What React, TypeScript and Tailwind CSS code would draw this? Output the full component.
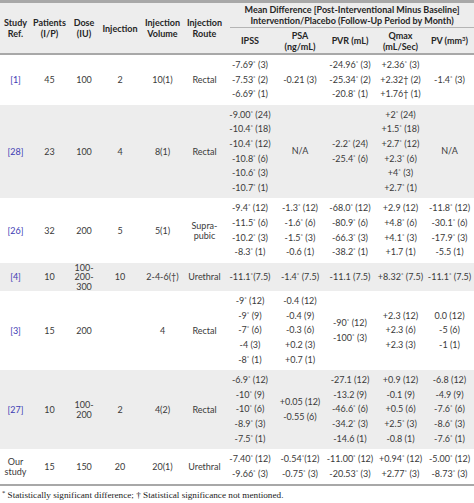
import React from "react";

type Cell = string[];

type Row = {
  ref: string;
  patients: string;
  dose: string[];
  injection: string;
  volume: string;
  route: string[];
  ipss: Cell;
  psa: Cell;
  pvr: Cell;
  qmax: Cell;
  pv: Cell;
  shaded?: boolean;
};

const rows: Row[] = [
  {
    ref: "[1]",
    patients: "45",
    dose: ["100"],
    injection: "2",
    volume: "10(1)",
    route: ["Rectal"],
    ipss: ["-7.69* (3)", "-7.53* (2)", "-6.69* (1)"],
    psa: ["-0.21 (3)"],
    pvr: ["-24.96* (3)", "-25.34* (2)", "-20.8* (1)"],
    qmax: ["+2.36* (3)", "+2.32† (2)", "+1.76† (1)"],
    pv: ["-1.4* (3)"],
  },
  {
    ref: "[28]",
    patients: "23",
    dose: ["100"],
    injection: "4",
    volume: "8(1)",
    route: ["Rectal"],
    ipss: ["-9.00* (24)", "-10.4* (18)", "-10.4* (12)", "-10.8* (6)", "-10.6* (3)", "-10.7* (1)"],
    psa: ["N/A"],
    pvr: ["-2.2* (24)", "-25.4* (6)"],
    qmax: ["+2* (24)", "+1.5* (18)", "+2.7* (12)", "+2.3* (6)", "+4* (3)", "+2.7* (1)"],
    pv: ["N/A"],
    shaded: true,
  },
  {
    ref: "[26]",
    patients: "32",
    dose: ["200"],
    injection: "5",
    volume: "5(1)",
    route: ["Supra-", "pubic"],
    ipss: ["-9.4* (12)", "-11.5* (6)", "-10.2* (3)", "-8.3* (1)"],
    psa: ["-1.3* (12)", "-1.6* (6)", "-1.5* (3)", "-0.6 (1)"],
    pvr: ["-68.0* (12)", "-80.9* (6)", "-66.3* (3)", "-38.2* (1)"],
    qmax: ["+2.9 (12)", "+4.8* (6)", "+4.1* (3)", "+1.7 (1)"],
    pv: ["-11.8* (12)", "-30.1* (6)", "-17.9* (3)", "-5.5 (1)"],
  },
  {
    ref: "[4]",
    patients: "10",
    dose: ["100-", "200-", "300"],
    injection: "10",
    volume: "2-4-6(†)",
    route: ["Urethral"],
    ipss: ["-11.1*(7.5)"],
    psa: ["-1.4* (7.5)"],
    pvr: ["-11.1 (7.5)"],
    qmax: ["+8.32* (7.5)"],
    pv: ["-11.1* (7.5)"],
    shaded: true,
  },
  {
    ref: "[3]",
    patients: "15",
    dose: ["200"],
    injection: "",
    volume: "4",
    route: ["Rectal"],
    ipss: ["-9* (12)", "-9* (9)", "-7* (6)", "-4 (3)", "-8* (1)"],
    psa: ["-0.4 (12)", "-0.4 (9)", "-0.3 (6)", "+0.2 (3)", "+0.7 (1)"],
    pvr: ["-90* (12)", "-100* (3)"],
    qmax: ["+2.3 (12)", "+2.3 (6)", "+2.3 (3)"],
    pv: ["0.0 (12)", "-5 (6)", "-1 (1)"],
  },
  {
    ref: "[27]",
    patients: "10",
    dose: ["100-", "200"],
    injection: "2",
    volume: "4(2)",
    route: ["Rectal"],
    ipss: ["-6.9* (12)", "-10* (9)", "-10* (6)", "-8.9* (3)", "-7.5* (1)"],
    psa: ["+0.05 (12)", "-0.55 (6)"],
    pvr: ["-27.1 (12)", "-13.2 (9)", "-46.6* (6)", "-34.2* (3)", "-14.6 (1)"],
    qmax: ["+0.9 (12)", "-0.1 (9)", "+0.5 (6)", "+2.5* (3)", "-0.8 (1)"],
    pv: ["-6.8 (12)", "-4.9 (9)", "-7.6* (6)", "-8.6* (3)", "-7.6* (1)"],
    shaded: true,
  },
  {
    ref: "Our study",
    patients: "15",
    dose: ["150"],
    injection: "20",
    volume: "20(1)",
    route: ["Urethral"],
    ipss: ["-7.40* (12)", "-9.66* (3)"],
    psa: ["-0.54*(12)", "-0.75* (3)"],
    pvr: ["-11.00* (12)", "-20.53* (3)"],
    qmax: ["+0.94* (12)", "+2.77* (3)"],
    pv: ["-5.00* (12)", "-8.73* (3)"],
  },
];

// "*" marks significance and sits raised and small after the number
function Value({ text }: { text: string }) {
  const parts = text.split("*");
  return (
    <>
      {parts.map((p, i) => (
        <React.Fragment key={i}>
          {i > 0 && <sup className="text-[6px] leading-[0]">*</sup>}
          {p}
        </React.Fragment>
      ))}
    </>
  );
}

function Lines({ values }: { values: string[] }) {
  return (
    <div className="flex flex-col items-center">
      {values.map((v, i) => (
        <div key={i} className="h-[14.6px] leading-[14.6px] whitespace-nowrap">
          <Value text={v} />
        </div>
      ))}
    </div>
  );
}

function Stack({ values, leading }: { values: string[]; leading: string }) {
  return (
    <div className={`flex flex-col items-center ${leading}`}>
      {values.map((v, i) => (
        <span key={i}>{v}</span>
      ))}
    </div>
  );
}

export default function App() {
  const th = "font-bold text-[#262626] text-center align-middle leading-[11px] px-0";
  const td = "text-center align-middle px-0 py-[3px]";

  return (
    <div className="w-[474px] bg-white font-['Lato','Liberation_Sans',sans-serif] text-[9px] text-[#3a3a3a]">
      <table className="w-[474px] table-fixed border-collapse">
        <colgroup>
          <col className="w-[31px]" />
          <col className="w-[37px]" />
          <col className="w-[32px]" />
          <col className="w-[40px]" />
          <col className="w-[45px]" />
          <col className="w-[39px]" />
          <col className="w-[52px]" />
          <col className="w-[48px]" />
          <col className="w-[52px]" />
          <col className="w-[49px]" />
          <col className="w-[49px]" />
        </colgroup>
        <thead className="bg-[#ededed] border-t-[3px] border-[#a8a8a8]">
          <tr className="h-[24px]">
            <th rowSpan={2} className={th}>
              Study
              <br />
              Ref.
            </th>
            <th rowSpan={2} className={th}>
              Patients
              <br />
              (I/P)
            </th>
            <th rowSpan={2} className={th}>
              Dose
              <br />
              (IU)
            </th>
            <th rowSpan={2} className={th}>
              Injection
            </th>
            <th rowSpan={2} className={th}>
              Injection
              <br />
              Volume
            </th>
            <th rowSpan={2} className={th}>
              Injection
              <br />
              Route
            </th>
            <th colSpan={5} className={`${th} pt-[1px] pb-0`}>
              <div className="ml-[6px] border-b border-[#b4b4b4] pb-[1px]">
                Mean Difference [Post-Interventional Minus Baseline]
                <br />
                Intervention/Placebo (Follow-Up Period by Month)
              </div>
            </th>
          </tr>
          <tr className="h-[26px] border-b-2 border-[#a8a8a8]">
            <th className={th}>IPSS</th>
            <th className={th}>
              PSA
              <br />
              (ng/mL)
            </th>
            <th className={th}>PVR (mL)</th>
            <th className={th}>
              Qmax
              <br />
              (mL/Sec)
            </th>
            <th className={th}>
              PV (mm<sup className="text-[6px] leading-[0]">3</sup>)
            </th>
          </tr>
        </thead>
        <tbody className="border-b-2 border-[#a8a8a8]">
          {rows.map((r) => (
            <tr key={r.ref} className={r.shaded ? "bg-[#ededed]" : "bg-white"}>
              <td className={`${td} ${r.ref.startsWith("[") ? "text-[#3c3cb4]" : ""}`}>
                {r.ref === "Our study" ? <Stack values={["Our", "study"]} leading="leading-[10px]" /> : r.ref}
              </td>
              <td className={td}>{r.patients}</td>
              <td className={r.dose.length > 1 ? "text-center align-middle p-0" : td}>
                {r.dose.length > 1 ? <Stack values={r.dose} leading="leading-[9.5px]" /> : r.dose[0]}
              </td>
              <td className={td}>{r.injection}</td>
              <td className={td}>{r.volume}</td>
              <td className={td}>
                {r.route.length > 1 ? <Stack values={r.route} leading="leading-[10px]" /> : r.route[0]}
              </td>
              <td className={td}>
                <Lines values={r.ipss} />
              </td>
              <td className={td}>
                <Lines values={r.psa} />
              </td>
              <td className={td}>
                <Lines values={r.pvr} />
              </td>
              <td className={td}>
                <Lines values={r.qmax} />
              </td>
              <td className={td}>
                <Lines values={r.pv} />
              </td>
            </tr>
          ))}
        </tbody>
      </table>
      <p className="pt-[3px] pl-[2px] font-['Liberation_Serif',serif] text-[9.2px] leading-[12px] text-[#222]">
        <sup className="text-[6.5px] leading-[0]">*</sup> Statistically significant difference; † Statistical
        significance not mentioned.
      </p>
    </div>
  );
}
